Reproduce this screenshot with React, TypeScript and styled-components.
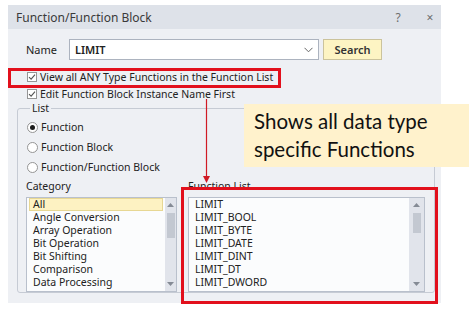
import React from "react";
import styled, { createGlobalStyle } from "styled-components";

const Global = createGlobalStyle`
  html, body { margin: 0; padding: 0; background: #ffffff; }
  * { box-sizing: border-box; }
`;

const UI = `"Noto Sans", "Open Sans", sans-serif`;

const Page = styled.div`
  position: relative;
  width: 474px;
  height: 312px;
  padding: 5px 0 0 8px;
  background: #ffffff;
  font-family: ${UI};
  font-size: 10.5px;
  color: #222;
`;

const Dialog = styled.div`
  width: 433px;
  height: 298px;
  background: #eef0f4;
  display: flex;
  flex-direction: column;
`;

const TitleBar = styled.div`
  height: 24px;
  background: #dee2e9;
  display: flex;
  align-items: center;
  justify-content: space-between;
  padding: 0 6px 0 8px;
  color: #3a3a3a;
`;

const TitleText = styled.span`
  font-size: 12px;
`;

const TitleButtons = styled.div`
  display: flex;
  gap: 22px;
  align-items: center;
  color: #6d6d6d;
  font-size: 12px;
`;

const TitleBtn = styled.span<{ $w: number }>`
  width: ${(p) => p.$w}px;
  text-align: center;
`;

const Body = styled.div`
  display: flex;
  flex-direction: column;
  padding: 10px 6px 0 9px;
`;

const NameRow = styled.div`
  display: flex;
  align-items: center;
  height: 21px;
  padding-left: 9px;
  font-size: 11px;
`;

const NameLabel = styled.span`
  width: 43px;
`;

const Combo = styled.div`
  width: 250px;
  height: 21px;
  border: 1px solid #acb3bf;
  background: #ffffff;
  display: flex;
  align-items: center;
  justify-content: space-between;
  padding: 0 5px 0 5px;
  font-weight: 600;
  color: #222;
`;

const SearchButton = styled.div`
  margin-left: 4px;
  width: 59px;
  height: 21px;
  background: #fdf4c3;
  border: 1px solid #cbc39c;
  display: flex;
  align-items: center;
  justify-content: center;
  font-weight: 600;
  color: #333;
`;

const CheckRows = styled.div`
  margin-top: 8px;
  display: flex;
  flex-direction: column;
  padding-left: 10px;
`;

const CheckRow = styled.div`
  height: 17px;
  display: flex;
  align-items: center;
  gap: 3px;
`;

const Box = styled.span`
  width: 10px;
  height: 10px;
  border: 1px solid #959595;
  background: #ffffff;
  display: flex;
  align-items: center;
  justify-content: center;
`;

const Group = styled.fieldset`
  margin: -2px 0 0 0;
  padding: 1px 9px 0 8px;
  border: 1px solid #c6cbd4;
  border-radius: 3px;
  min-width: 0;
`;

const Legend = styled.legend`
  margin-left: 4px;
  padding: 0 2px;
  line-height: 16px;
  font-size: 10.5px;
`;

const RadioRow = styled.div`
  height: 20px;
  display: flex;
  align-items: center;
  gap: 3px;
  padding-left: 1px;
`;

const RadioCircle = styled.span<{ $on?: boolean }>`
  width: 11px;
  height: 11px;
  border-radius: 50%;
  border: 1px solid #959595;
  background: #ffffff;
  display: flex;
  align-items: center;
  justify-content: center;
  &::after {
    content: "";
    width: 5px;
    height: 5px;
    border-radius: 50%;
    background: ${(p) => (p.$on ? "#1c1c1c" : "transparent")};
  }
`;

const ListsGrid = styled.div`
  display: grid;
  grid-template-columns: 151px 237px;
  grid-template-rows: 18px 95px;
  column-gap: 11px;
  row-gap: 2px;
`;

const ColLabel = styled.div`
  display: flex;
  align-items: center;
`;

const ListBox = styled.div`
  border: 1px solid #b9c0cc;
  background: #fbfcfd;
  display: flex;
  overflow: hidden;
`;

const Items = styled.div<{ $pad: number }>`
  flex: 1;
  display: flex;
  flex-direction: column;
  padding: 0 2px 0 ${(p) => p.$pad}px;
`;

const Item = styled.div<{ $sel?: boolean }>`
  height: 13px;
  line-height: 13px;
  padding-left: 4px;
  box-shadow: ${(p) => (p.$sel ? "inset 0 0 0 1px #e7d793" : "none")};
  background: ${(p) => (p.$sel ? "#fdf2c2" : "transparent")};
  white-space: nowrap;
`;

const ScrollBar = styled.div<{ $w: number }>`
  width: ${(p) => p.$w}px;
  background: #e1e4eb;
  display: flex;
  flex-direction: column;
  align-items: center;
`;

const Arrow = styled.div`
  height: 14px;
  display: flex;
  align-items: center;
  justify-content: center;
`;

const Thumb = styled.div<{ $h: number; $w: number }>`
  margin-top: 1px;
  width: ${(p) => p.$w}px;
  height: ${(p) => p.$h}px;
  background: #c3c8d1;
`;

const Spacer = styled.div`
  flex: 1;
`;

const RedBox = styled.div`
  position: absolute;
  border: 3px solid #e2101c;
`;

const ArrowSvg = styled.svg`
  position: absolute;
  left: 203px;
  top: 99px;
`;

const Callout = styled.div`
  position: absolute;
  left: 244px;
  top: 104px;
  width: 225px;
  height: 63px;
  background: #fff2cc;
  padding: 3px 0 0 10px;
  font-family: Lato, "Noto Sans", sans-serif;
  font-size: 20.5px;
  line-height: 28px;
  color: #111;
`;

const Check = () => (
  <Box>
    <svg width="8" height="8" viewBox="0 0 8 8">
      <path d="M1 4.2 L3.1 6.2 L7 1.6" fill="none" stroke="#555" strokeWidth="1.1" />
    </svg>
  </Box>
);

const Tri = ({ up }: { up?: boolean }) => (
  <svg width="7" height="4" viewBox="0 0 7 4">
    <path d={up ? "M0 4 L3.5 0 L7 4 Z" : "M0 0 L7 0 L3.5 4 Z"} fill="#858b95" />
  </svg>
);

const Scroll = ({ w, tw, th }: { w: number; tw: number; th: number }) => (
  <ScrollBar $w={w}>
    <Arrow><Tri up /></Arrow>
    <Thumb $w={tw} $h={th} />
    <Spacer />
    <Arrow><Tri /></Arrow>
  </ScrollBar>
);

const categories = [
  "All",
  "Angle Conversion",
  "Array Operation",
  "Bit Operation",
  "Bit Shifting",
  "Comparison",
  "Data Processing",
];

const functions = [
  "LIMIT",
  "LIMIT_BOOL",
  "LIMIT_BYTE",
  "LIMIT_DATE",
  "LIMIT_DINT",
  "LIMIT_DT",
  "LIMIT_DWORD",
];

export default function App() {
  return (
    <>
      <Global />
      <Page>
        <Dialog>
          <TitleBar>
            <TitleText>Function/Function Block</TitleText>
            <TitleButtons>
              <TitleBtn $w={10}>?</TitleBtn>
              <TitleBtn $w={10}>×</TitleBtn>
            </TitleButtons>
          </TitleBar>
          <Body>
            <NameRow>
              <NameLabel>Name</NameLabel>
              <Combo>
                <span>LIMIT</span>
                <svg width="9" height="6" viewBox="0 0 9 6">
                  <path d="M0.5 0.8 L4.5 4.8 L8.5 0.8" fill="none" stroke="#666" strokeWidth="1" />
                </svg>
              </Combo>
              <SearchButton>Search</SearchButton>
            </NameRow>
            <CheckRows>
              <CheckRow>
                <Check />
                <span>View all ANY Type Functions in the Function List</span>
              </CheckRow>
              <CheckRow>
                <Check />
                <span>Edit Function Block Instance Name First</span>
              </CheckRow>
            </CheckRows>
            <Group>
              <Legend>List</Legend>
              <RadioRow>
                <RadioCircle $on />
                <span>Function</span>
              </RadioRow>
              <RadioRow>
                <RadioCircle />
                <span>Function Block</span>
              </RadioRow>
              <RadioRow>
                <RadioCircle />
                <span>Function/Function Block</span>
              </RadioRow>
              <ListsGrid>
                <ColLabel>Category</ColLabel>
                <ColLabel>Function List</ColLabel>
                <ListBox>
                  <Items $pad={2}>
                    {categories.map((c, i) => (
                      <Item key={c} $sel={i === 0}>{c}</Item>
                    ))}
                  </Items>
                  <Scroll w={11} tw={8} th={25} />
                </ListBox>
                <ListBox>
                  <Items $pad={2}>
                    {functions.map((f) => (
                      <Item key={f}>{f}</Item>
                    ))}
                  </Items>
                  <Scroll w={15} tw={8} th={20} />
                </ListBox>
              </ListsGrid>
            </Group>
          </Body>
        </Dialog>

        <RedBox style={{ left: 8, top: 68, width: 273, height: 20 }} />
        <RedBox style={{ left: 181, top: 187, width: 257, height: 117 }} />
        <ArrowSvg width="7" height="84" viewBox="0 0 7 84">
          <line x1="3.5" y1="0" x2="3.5" y2="78" stroke="#d01a24" strokeWidth="1.2" />
          <path d="M0 77 L7 77 L3.5 84 Z" fill="#d01a24" />
        </ArrowSvg>
        <Callout>
          Shows all data type
          <br />
          specific Functions
        </Callout>
      </Page>
    </>
  );
}
